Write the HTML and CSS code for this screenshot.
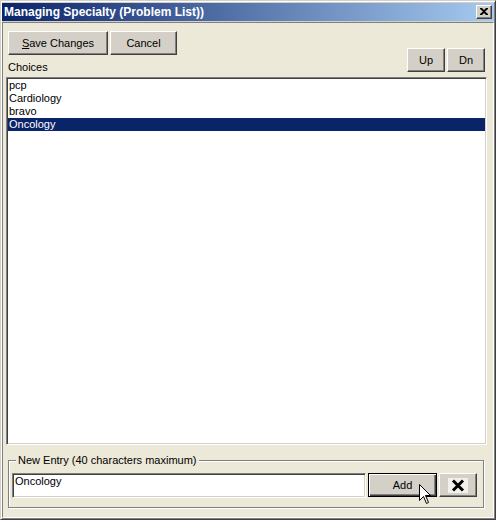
FILE: index.html
```html
<!DOCTYPE html>
<html>
<head>
<meta charset="utf-8">
<link rel="stylesheet" href="styles.css">
</head>
<body>
<div class="window">
  <div class="titlebar">
    <span class="title">Managing Specialty (Problem List))</span>
    <span class="close-btn">
      <svg width="8" height="7" viewBox="0 0 8 7"><path d="M0 0h2l2 2 2-2h2v1L5 3.5 8 6v1H6L4 5 2 7H0V6l3-2.5L0 1z" fill="#000"/></svg>
    </span>
  </div>
  <div class="client">
    <div class="header">
      <div class="header-left">
        <div class="btn-row">
          <button class="btn btn-save"><u>S</u>ave Changes</button>
          <button class="btn btn-cancel">Cancel</button>
        </div>
        <div class="label">Choices</div>
      </div>
      <div class="header-right">
        <button class="btn btn-small">Up</button>
        <button class="btn btn-small">Dn</button>
      </div>
    </div>
    <div class="listbox">
      <div class="item">pcp</div>
      <div class="item">Cardiology</div>
      <div class="item">bravo</div>
      <div class="item selected">Oncology</div>
    </div>
    <fieldset class="group">
      <legend class="group-label">New Entry (40 characters maximum)</legend>
      <div class="entry-row">
        <div class="textbox">Oncology</div>
        <button class="btn btn-add">Add
          <svg class="cursor" width="13" height="21" viewBox="0 0 13 21"><path d="M0.5 0.5V16.5L4.5 12.5L7.5 19.5L9.5 18.5L6.5 11.5H11.5Z" fill="#fff" stroke="#000" stroke-width="1" stroke-linejoin="miter"/></svg>
        </button>
        <button class="btn btn-del">
          <svg width="20" height="15" viewBox="0 0 20 15"><rect width="20" height="15" fill="#f1f0ea"/><path d="M5 2.5L15 12.5M15 2.5L5 12.5" stroke="#000" stroke-width="3"/></svg>
        </button>
      </div>
    </fieldset>
  </div>
</div>
</body>
</html>
```

FILE: styles.css
```css
html, body {
  margin: 0;
  padding: 0;
  background: #ece9d8;
}

.window {
  width: 496px;
  height: 520px;
  box-sizing: border-box;
  border: 1px solid;
  border-color: #d4d0c8 #404040 #404040 #d4d0c8;
  box-shadow: inset 1px 1px #fff, inset -1px -1px #808080;
  padding: 1px;
  background: #d4d0c8;
  display: flex;
  flex-direction: column;
  font-family: "Liberation Sans", Arial, sans-serif;
  font-size: 11px;
  color: #000;
}

.titlebar {
  margin-top: 1px;
  height: 18px;
  flex: none;
  background: linear-gradient(to right, #0a246a, #a6caf0);
  display: flex;
  align-items: center;
  justify-content: space-between;
  padding-left: 2px;
}

.title {
  color: #fff;
  font-weight: bold;
  font-size: 12px;
  line-height: 14px;
}

.close-btn {
  width: 16px;
  height: 14px;
  box-sizing: border-box;
  margin-right: 2px;
  background: #d4d0c8;
  border: 1px solid;
  border-color: #fff #404040 #404040 #fff;
  box-shadow: inset -1px -1px #808080;
  display: flex;
  align-items: center;
  justify-content: center;
  padding-bottom: 1px;
}

.close-btn svg {
  display: block;
}

.client {
  flex: 1;
  margin-top: 1px;
  border: 1px solid;
  border-color: #808080 #fff #fff #808080;
  background: #ece9d8;
  display: flex;
  flex-direction: column;
  min-height: 0;
}

.header {
  display: flex;
  justify-content: space-between;
  align-items: flex-end;
  padding-top: 8px;
}

.header-left {
  margin-left: 5px;
}

.btn-row {
  display: flex;
  gap: 2px;
}

.btn {
  font-family: "Liberation Sans", Arial, sans-serif;
  font-size: 11px;
  color: #000;
  background: #d4d0c8;
  border: 1px solid;
  border-color: #fff #404040 #404040 #fff;
  box-shadow: inset -1px -1px #808080;
  border-radius: 0;
  height: 24px;
  padding: 0;
  margin: 0;
  box-sizing: border-box;
  display: flex;
  align-items: center;
  justify-content: center;
  line-height: 13px;
}

.btn u {
  text-decoration: underline;
}

.btn-save {
  width: 100px;
}

.btn-cancel {
  width: 67px;
}

.label {
  margin-top: 6px;
  height: 13px;
  line-height: 13px;
  margin-bottom: 3px;
}

.header-right {
  display: flex;
  gap: 2px;
  margin-right: 8px;
  margin-bottom: 5px;
}

.btn-small {
  width: 38px;
}

.listbox {
  flex: 1;
  margin: 0 6px 0 3px;
  background: #fff;
  border: 1px solid;
  border-color: #808080 #fff #fff #808080;
  box-shadow: inset 1px 1px #404040, inset -1px -1px #d4d0c8;
  padding: 1px;
  min-height: 0;
}

.item {
  height: 13px;
  line-height: 13px;
  padding-left: 1px;
  white-space: nowrap;
}

.item.selected {
  background: #0a246a;
  color: #fff;
}

.group {
  margin: 9px 9px 9px 5px;
  border: 1px solid #808080;
  box-shadow: inset 1px 1px #fff, 1px 1px #fff;
  padding: 6px 3px 9px 3px;
  min-width: 0;
}

.group-label {
  padding: 0 2px;
  margin-left: 4px;
  line-height: 13px;
  height: 13px;
  background: #ece9d8;
}

.entry-row {
  display: flex;
  gap: 2px;
  align-items: flex-start;
}

.textbox {
  width: 354px;
  height: 25px;
  box-sizing: border-box;
  background: #fff;
  border: 1px solid;
  border-color: #808080 #fff #fff #808080;
  box-shadow: inset 1px 1px #404040, inset -1px -1px #d4d0c8;
  padding: 1px 0 0 2px;
  line-height: 13px;
}

.btn-add {
  width: 69px;
  position: relative;
  border: 1px solid #000;
  box-shadow: inset 1px 1px #fff, inset -1px -1px #404040, inset -2px -2px #808080;
}

.cursor {
  position: absolute;
  left: 50px;
  top: 10px;
}

.btn-del {
  width: 38px;
}

.btn-del svg {
  display: block;
}
```
